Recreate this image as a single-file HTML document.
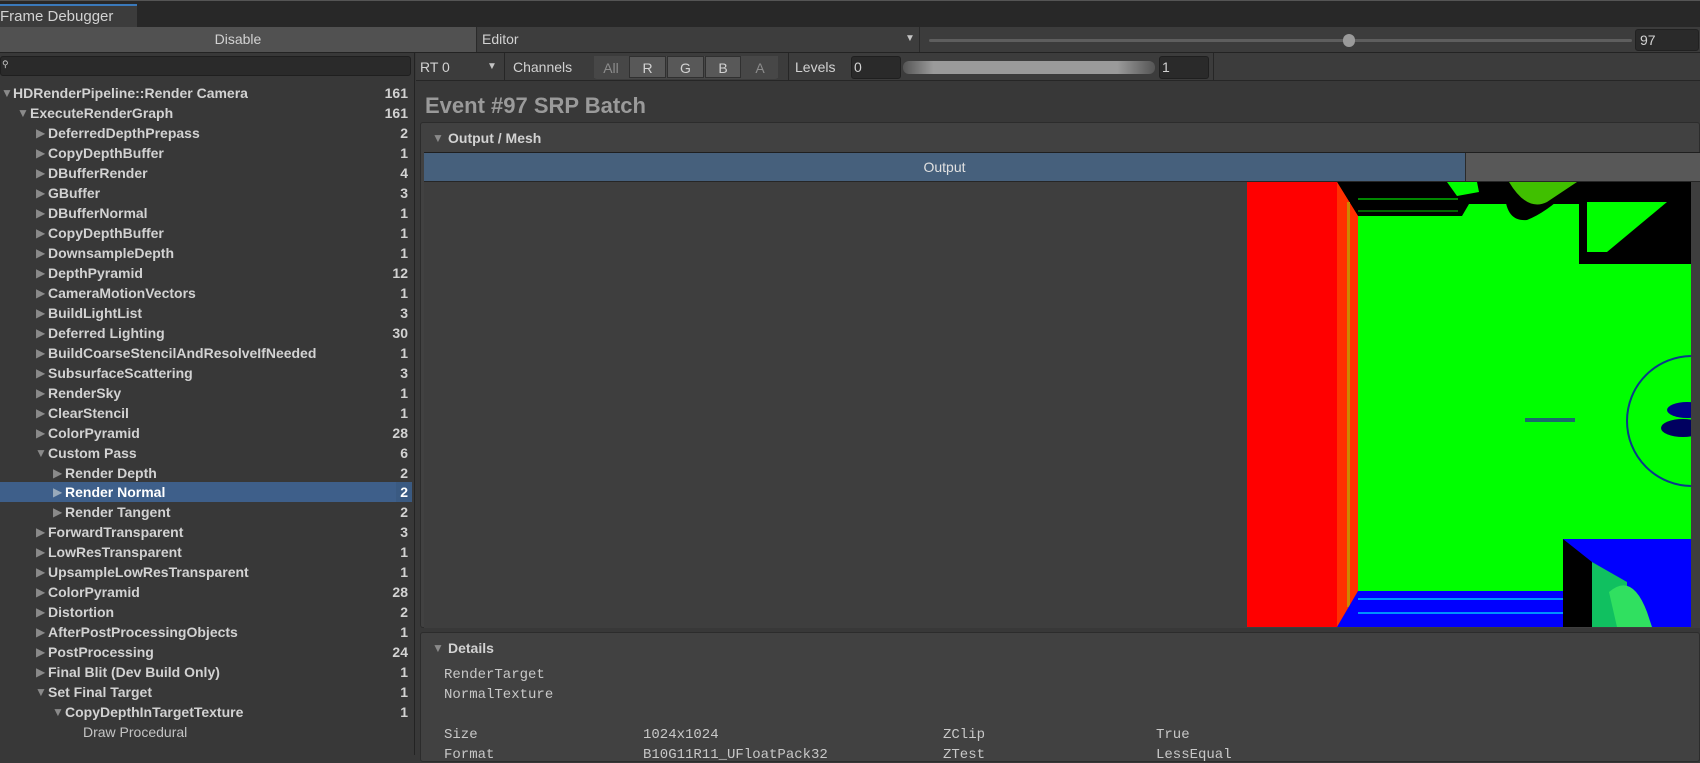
<!DOCTYPE html>
<html><head><meta charset="utf-8"><style>
*{margin:0;padding:0;box-sizing:border-box}
body{width:1700px;height:755px;overflow:hidden;background:#383838;font-family:"Liberation Sans",sans-serif;color:#d2d2d2;position:relative}
.a{position:absolute}
.row{position:absolute;left:0;width:412px;height:20px;font-size:14px;font-weight:bold;line-height:20px;white-space:nowrap}
.row .t{position:absolute;top:0}
.row .n{position:absolute;right:4px;top:0}
.tri{position:absolute;top:0;color:#8a8a8a;font-size:12px;line-height:20px;font-weight:normal}
.btn{position:absolute;top:56px;height:22px;font-size:14px;line-height:22px;text-align:center;color:#d2d2d2;background:#585858;border:1px solid #303030}
.mono{font-family:"Liberation Mono",monospace;font-size:14px;color:#c8c8c8;position:absolute}
</style></head><body>
<div class="a" style="left:0;top:0;width:1700px;height:27px;background:#282828"></div>
<div class="a" style="left:0;top:0;width:1700px;height:1px;background:#555"></div>
<div class="a" style="left:0;top:4px;width:137px;height:23px;background:#3c3c3c;border-top:2px solid #3a79bb"></div>
<div class="a" style="left:0;top:6px;font-size:15px;line-height:21px;color:#d2d2d2">Frame Debugger</div>
<div class="a" style="left:0;top:27px;width:1700px;height:26px;background:#3c3c3c;border-bottom:1px solid #232323"></div>
<div class="a" style="left:0;top:27px;width:477px;height:25px;background:#515151;border-right:1px solid #2a2a2a;text-align:center;font-size:14px;line-height:25px">Disable</div>
<div class="a" style="left:478px;top:27px;width:442px;height:25px;background:#3d3d3d;border-right:1px solid #2a2a2a;font-size:14px;line-height:25px;padding-left:4px">Editor</div>
<div class="a" style="left:905px;top:33px;font-size:10px;color:#c4c4c4">▼</div>
<div class="a" style="left:929px;top:39px;width:703px;height:3px;background:#5e5e5e;border-radius:2px"></div>
<div class="a" style="left:1343px;top:34px;width:12px;height:13px;background:#9a9a9a;border-radius:6px"></div>
<div class="a" style="left:1635px;top:29px;width:64px;height:22px;background:#2a2a2a;border:1px solid #212121;border-radius:3px;font-size:14px;line-height:20px;padding-left:4px">97</div>
<div class="a" style="left:0;top:53px;width:415px;height:702px;background:#383838;border-right:1px solid #232323"></div>
<div class="a" style="left:0;top:56px;width:411px;height:20px;background:#2a2a2a;border:1px solid #1f1f1f;border-radius:3px"></div>
<div class="a" style="left:2px;top:59px;font-size:9px;color:#ccc">⚲</div>
<div class="a" style="left:416px;top:53px;width:1284px;height:28px;background:#3c3c3c;border-bottom:1px solid #262626"></div>
<div class="a" style="left:420px;top:57px;font-size:14px;line-height:20px">RT 0</div>
<div class="a" style="left:487px;top:61px;font-size:10px;color:#c4c4c4">▼</div>
<div class="a" style="left:504px;top:53px;width:1px;height:28px;background:#262626"></div>
<div class="a" style="left:513px;top:57px;font-size:14px;line-height:20px">Channels</div>
<div class="a" style="left:594px;top:56px;width:184px;height:23px;background:#474747;border-radius:3px"></div>
<div class="btn" style="left:594px;width:34px;background:#474747;color:#8c8c8c;border-color:#474747">All</div>
<div class="btn" style="left:629px;width:37px">R</div>
<div class="btn" style="left:667px;width:37px">G</div>
<div class="btn" style="left:705px;width:36px">B</div>
<div class="btn" style="left:742px;width:36px;background:#474747;color:#8c8c8c;border-color:#474747">A</div>
<div class="a" style="left:788px;top:53px;width:1px;height:28px;background:#262626"></div>
<div class="a" style="left:795px;top:57px;font-size:14px;line-height:20px">Levels</div>
<div class="a" style="left:851px;top:56px;width:50px;height:23px;background:#2a2a2a;border:1px solid #1f1f1f;border-radius:3px;font-size:14px;line-height:21px;padding-left:2px">0</div>
<div class="a" style="left:903px;top:61px;width:252px;height:13px;border-radius:6px;background:linear-gradient(90deg,#555 0%,#9a9a9a 12%,#9a9a9a 85%,#555 100%)"></div>
<div class="a" style="left:1159px;top:56px;width:50px;height:23px;background:#2a2a2a;border:1px solid #1f1f1f;border-radius:3px;font-size:14px;line-height:21px;padding-left:2px">1</div>
<div class="a" style="left:1213px;top:53px;width:1px;height:28px;background:#262626"></div>
<div class="a" style="left:416px;top:82px;width:1284px;height:673px;background:#383838"></div>
<div class="a" style="left:425px;top:93px;font-size:22px;font-weight:bold;color:#9a9a9a">Event #97 SRP Batch</div>
<div class="a" style="left:420px;top:122px;width:1280px;height:506px;background:#414141;border:1px solid #2c2c2c;border-radius:3px"></div>
<div class="a" style="left:432px;top:129px;font-size:12px;line-height:18px;color:#8a8a8a">▼</div>
<div class="a" style="left:448px;top:129px;font-size:14px;font-weight:bold;line-height:18px">Output / Mesh</div>
<div class="a" style="left:424px;top:152px;width:1276px;height:30px;background:#585858;border-top:1px solid #1f1f1f;border-bottom:1px solid #262626"></div>
<div class="a" style="left:424px;top:153px;width:1042px;height:28px;background:#46607c;border-right:1px solid #2a2a2a;text-align:center;font-size:14px;line-height:28px;color:#e0e0e0">Output</div>
<div class="a" style="left:424px;top:182px;width:1276px;height:446px;background:#3e3e3e"></div>
<svg class="a" style="left:1247px;top:182px" width="444" height="445" viewBox="0 0 444 445">
<rect width="444" height="445" fill="#00ff00"/>
<rect x="0" y="0" width="111" height="445" fill="#ff0000"/>
<polygon points="90,0 444,0 444,22 222,22 215,34 111,34" fill="#000"/>
<polygon points="90,0 111,34 111,409 90,445" fill="#ff3000"/>
<rect x="100" y="20" width="3" height="405" fill="#cc8800"/>
<polygon points="111,409 365,409 380,445 90,445" fill="#0000ff"/>
<rect x="111" y="416" width="260" height="2" fill="#0090ff"/>
<rect x="111" y="430" width="260" height="2" fill="#0090ff"/>
<rect x="111" y="16" width="100" height="2" fill="#008800"/>
<rect x="111" y="28" width="100" height="2" fill="#006600"/>
<polygon points="200,0 230,0 232,10 210,14" fill="#00ff00"/>
<path d="M258 14 Q260 40 280 38 Q300 30 320 10 L320 0 L270 0 Z" fill="#000"/>
<path d="M262 0 Q280 30 300 20 L330 0 Z" fill="#40c000"/>
<rect x="330" y="0" width="114" height="20" fill="#000"/>
<rect x="332" y="20" width="112" height="62" fill="#000"/>
<polygon points="340,20 420,20 360,70 340,70" fill="#00ff00"/>
<circle cx="445" cy="239" r="65" fill="none" stroke="#0a3a8a" stroke-width="2"/>
<rect x="278" y="236" width="50" height="4" fill="#1a6a6a"/>
<ellipse cx="440" cy="228" rx="20" ry="8" fill="#00008a"/>
<ellipse cx="436" cy="246" rx="22" ry="9" fill="#000060"/>
<polygon points="316,357 444,357 444,445 316,445" fill="#0000ff"/>
<polygon points="316,357 345,380 345,445 316,445" fill="#000"/>
<path d="M345 380 L380 400 L380 445 L345 445 Z" fill="#10c060"/>
<path d="M362 410 Q385 390 400 430 L405 445 L370 445 Z" fill="#30e060"/>
</svg>
<div class="a" style="left:420px;top:632px;width:1280px;height:130px;background:#414141;border:1px solid #2c2c2c;border-radius:3px"></div>
<div class="a" style="left:432px;top:639px;font-size:12px;line-height:18px;color:#8a8a8a">▼</div>
<div class="a" style="left:448px;top:639px;font-size:14px;font-weight:bold;line-height:18px">Details</div>
<div class="mono" style="left:444px;top:667px">RenderTarget</div>
<div class="mono" style="left:444px;top:687px">NormalTexture</div>
<div class="mono" style="left:444px;top:727px">Size</div>
<div class="mono" style="left:643px;top:727px">1024x1024</div>
<div class="mono" style="left:943px;top:727px">ZClip</div>
<div class="mono" style="left:1156px;top:727px">True</div>
<div class="mono" style="left:444px;top:747px">Format</div>
<div class="mono" style="left:643px;top:747px">B10G11R11_UFloatPack32</div>
<div class="mono" style="left:943px;top:747px">ZTest</div>
<div class="mono" style="left:1156px;top:747px">LessEqual</div>
<div class="a" style="left:0;top:482px;width:412px;height:20px;background:#3e5f8a"></div>
<div class="a" style="left:396px;top:482px;width:16px;height:20px;background:#3a5a82"></div>
<div class="row" style="top:83px"><span class="tri" style="left:1px">▼</span><span class="t" style="left:13px">HDRenderPipeline::Render Camera</span><span class="n">161</span></div>
<div class="row" style="top:103px"><span class="tri" style="left:17px">▼</span><span class="t" style="left:30px">ExecuteRenderGraph</span><span class="n">161</span></div>
<div class="row" style="top:123px"><span class="tri" style="left:36px">▶</span><span class="t" style="left:48px">DeferredDepthPrepass</span><span class="n">2</span></div>
<div class="row" style="top:143px"><span class="tri" style="left:36px">▶</span><span class="t" style="left:48px">CopyDepthBuffer</span><span class="n">1</span></div>
<div class="row" style="top:163px"><span class="tri" style="left:36px">▶</span><span class="t" style="left:48px">DBufferRender</span><span class="n">4</span></div>
<div class="row" style="top:183px"><span class="tri" style="left:36px">▶</span><span class="t" style="left:48px">GBuffer</span><span class="n">3</span></div>
<div class="row" style="top:203px"><span class="tri" style="left:36px">▶</span><span class="t" style="left:48px">DBufferNormal</span><span class="n">1</span></div>
<div class="row" style="top:223px"><span class="tri" style="left:36px">▶</span><span class="t" style="left:48px">CopyDepthBuffer</span><span class="n">1</span></div>
<div class="row" style="top:243px"><span class="tri" style="left:36px">▶</span><span class="t" style="left:48px">DownsampleDepth</span><span class="n">1</span></div>
<div class="row" style="top:263px"><span class="tri" style="left:36px">▶</span><span class="t" style="left:48px">DepthPyramid</span><span class="n">12</span></div>
<div class="row" style="top:283px"><span class="tri" style="left:36px">▶</span><span class="t" style="left:48px">CameraMotionVectors</span><span class="n">1</span></div>
<div class="row" style="top:303px"><span class="tri" style="left:36px">▶</span><span class="t" style="left:48px">BuildLightList</span><span class="n">3</span></div>
<div class="row" style="top:323px"><span class="tri" style="left:36px">▶</span><span class="t" style="left:48px">Deferred Lighting</span><span class="n">30</span></div>
<div class="row" style="top:343px"><span class="tri" style="left:36px">▶</span><span class="t" style="left:48px">BuildCoarseStencilAndResolveIfNeeded</span><span class="n">1</span></div>
<div class="row" style="top:363px"><span class="tri" style="left:36px">▶</span><span class="t" style="left:48px">SubsurfaceScattering</span><span class="n">3</span></div>
<div class="row" style="top:383px"><span class="tri" style="left:36px">▶</span><span class="t" style="left:48px">RenderSky</span><span class="n">1</span></div>
<div class="row" style="top:403px"><span class="tri" style="left:36px">▶</span><span class="t" style="left:48px">ClearStencil</span><span class="n">1</span></div>
<div class="row" style="top:423px"><span class="tri" style="left:36px">▶</span><span class="t" style="left:48px">ColorPyramid</span><span class="n">28</span></div>
<div class="row" style="top:443px"><span class="tri" style="left:35px">▼</span><span class="t" style="left:48px">Custom Pass</span><span class="n">6</span></div>
<div class="row" style="top:463px"><span class="tri" style="left:53px">▶</span><span class="t" style="left:65px">Render Depth</span><span class="n">2</span></div>
<div class="row" style="top:482px;color:#fff"><span class="tri" style="left:53px;color:#9ab">▶</span><span class="t" style="left:65px">Render Normal</span><span class="n">2</span></div>
<div class="row" style="top:502px"><span class="tri" style="left:53px">▶</span><span class="t" style="left:65px">Render Tangent</span><span class="n">2</span></div>
<div class="row" style="top:522px"><span class="tri" style="left:36px">▶</span><span class="t" style="left:48px">ForwardTransparent</span><span class="n">3</span></div>
<div class="row" style="top:542px"><span class="tri" style="left:36px">▶</span><span class="t" style="left:48px">LowResTransparent</span><span class="n">1</span></div>
<div class="row" style="top:562px"><span class="tri" style="left:36px">▶</span><span class="t" style="left:48px">UpsampleLowResTransparent</span><span class="n">1</span></div>
<div class="row" style="top:582px"><span class="tri" style="left:36px">▶</span><span class="t" style="left:48px">ColorPyramid</span><span class="n">28</span></div>
<div class="row" style="top:602px"><span class="tri" style="left:36px">▶</span><span class="t" style="left:48px">Distortion</span><span class="n">2</span></div>
<div class="row" style="top:622px"><span class="tri" style="left:36px">▶</span><span class="t" style="left:48px">AfterPostProcessingObjects</span><span class="n">1</span></div>
<div class="row" style="top:642px"><span class="tri" style="left:36px">▶</span><span class="t" style="left:48px">PostProcessing</span><span class="n">24</span></div>
<div class="row" style="top:662px"><span class="tri" style="left:36px">▶</span><span class="t" style="left:48px">Final Blit (Dev Build Only)</span><span class="n">1</span></div>
<div class="row" style="top:682px"><span class="tri" style="left:35px">▼</span><span class="t" style="left:48px">Set Final Target</span><span class="n">1</span></div>
<div class="row" style="top:702px"><span class="tri" style="left:52px">▼</span><span class="t" style="left:65px">CopyDepthInTargetTexture</span><span class="n">1</span></div>
<div class="row" style="top:722px;font-weight:normal;color:#c4c4c4"><span class="t" style="left:83px">Draw Procedural</span></div>
</body></html>
